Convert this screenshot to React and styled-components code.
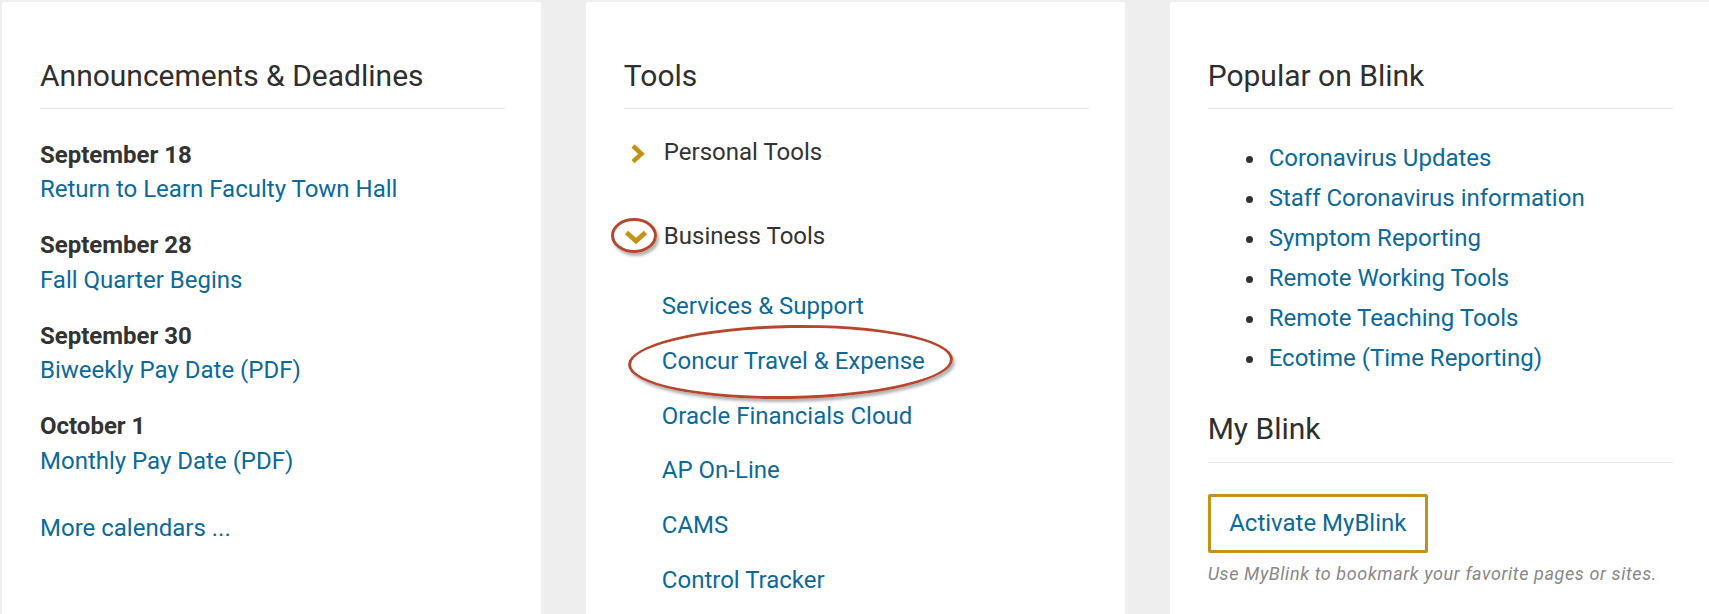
import React from 'react';
import styled, { createGlobalStyle } from 'styled-components';

const GlobalStyle = createGlobalStyle`
  html, body {
    margin: 0;
    padding: 0;
  }
  body {
    background: #eee;
    font-family: Roboto, "Noto Sans", Arial, sans-serif;
    color: #333;
  }
  * {
    box-sizing: border-box;
  }
`;

const events = [
    { date: 'September 18', title: 'Return to Learn Faculty Town Hall' },
    { date: 'September 28', title: 'Fall Quarter Begins' },
    { date: 'September 30', title: 'Biweekly Pay Date (PDF)' },
    { date: 'October 1', title: 'Monthly Pay Date (PDF)' }
];

const businessTools = [
    'Services & Support',
    'Concur Travel & Expense',
    'Oracle Financials Cloud',
    'AP On-Line',
    'CAMS',
    'Control Tracker'
];

const popular = [
    'Coronavirus Updates',
    'Staff Coronavirus information',
    'Symptom Reporting',
    'Remote Working Tools',
    'Remote Teaching Tools',
    'Ecotime (Time Reporting)'
];

const ChevronRight = () => (
    <svg width="26" height="35" viewBox="0 0 26 35">
        <polyline points="9,11 17.5,18.8 9,26.6" fill="none" stroke="#c69214" strokeWidth="4.5" />
    </svg>
);

const ChevronDown = () => (
    <svg width="26" height="35" viewBox="0 0 26 35">
        <polyline points="2.5,13.5 12,22 21.5,13.5" fill="none" stroke="#c69214" strokeWidth="4.8" />
    </svg>
);

const App = () => {
    return (<>
        <GlobalStyle />
        <Page>
            <Card>
                <Heading>Announcements &amp; Deadlines</Heading>
                <EventList>
                    {events.map(ev => (
                        <Event key={ev.date}>
                            <EventDate>{ev.date}</EventDate>
                            <TextLink href="#">{ev.title}</TextLink>
                        </Event>
                    ))}
                </EventList>
                <MoreLink href="#">More calendars ...</MoreLink>
            </Card>

            <Card>
                <Heading>Tools</Heading>
                <ToolGroups>
                    <Toggle>
                        <ChevronRight />
                        <span>Personal Tools</span>
                    </Toggle>
                    <div>
                        <Toggle>
                            <ChevronDown />
                            <span>Business Tools</span>
                            <Ring $x={-13} $y={-1.5} $w={46} $h={35} />
                        </Toggle>
                        <SubList>
                            {businessTools.map(t => (
                                <SubItem key={t}>
                                    <TextLink href="#">{t}</TextLink>
                                    {t === 'Concur Travel & Expense' && (
                                        <Ring $x={-34} $y={-19} $w={325} $h={74} $tilt />
                                    )}
                                </SubItem>
                            ))}
                        </SubList>
                    </div>
                </ToolGroups>
            </Card>

            <Card>
                <Heading>Popular on Blink</Heading>
                <BulletList>
                    {popular.map(p => (
                        <Bullet key={p}>
                            <TextLink href="#">{p}</TextLink>
                        </Bullet>
                    ))}
                </BulletList>
                <Heading $spaced>My Blink</Heading>
                <ButtonRow>
                    <OutlineButton href="#">Activate MyBlink</OutlineButton>
                </ButtonRow>
                <HelpText>Use MyBlink to bookmark your favorite pages or sites.</HelpText>
            </Card>
        </Page>
    </>);
}

export default App;

const Page = styled.div`
    display: grid;
    grid-template-columns: repeat(3, 1fr);
    column-gap: 44.5px;
    padding: 2px 0 0 2px;
    height: 100vh;
    overflow: hidden;
`

const Card = styled.section`
    background: #fff;
    padding: 56px 36px 0 38px;
`

const Heading = styled.h2`
    margin: ${p => p.$spaced ? '35px 0 0' : '0'};
    padding-bottom: ${p => p.$spaced ? '15px' : '14px'};
    border-bottom: 1px solid #e6e6e6;
    font-size: 30px;
    line-height: 36px;
    font-weight: 400;
    color: #2f2f2f;
`

const EventList = styled.div`
    margin-top: 28.5px;
    display: flex;
    flex-direction: column;
    gap: 21.5px;
`

const Event = styled.div`
    display: flex;
    flex-direction: column;
`

const EventDate = styled.strong`
    font-size: 24px;
    line-height: 34.5px;
    font-weight: 700;
    color: #333;
`

const TextLink = styled.a`
    display: block;
    font-size: 24px;
    line-height: 34.5px;
    color: #0b6a9b;
    text-decoration: none;
`

const MoreLink = styled(TextLink)`
    margin-top: 32.5px;
`

const ToolGroups = styled.div`
    margin-top: 25.5px;
    display: flex;
    flex-direction: column;
    gap: 49.5px;
`

const Toggle = styled.div`
    position: relative;
    display: flex;
    align-items: center;
    gap: 14px;
    font-size: 24px;
    line-height: 34.5px;
    color: #333;

    svg {
        flex: none;
        display: block;
    }
`

const SubList = styled.div`
    margin-top: 35px;
    padding-left: 38px;
    display: flex;
    flex-direction: column;
    gap: 20.3px;
`

const SubItem = styled.div`
    position: relative;
`

const Ring = styled.span`
    position: absolute;
    left: ${p => p.$x}px;
    top: ${p => p.$y}px;
    width: ${p => p.$w}px;
    height: ${p => p.$h}px;
    border: 3.5px solid #b8462f;
    border-radius: 50%;
    box-shadow: 2px 3px 3px rgba(0, 0, 0, 0.3);
    transform: ${p => p.$tilt ? 'rotate(-1deg)' : 'none'};
    pointer-events: none;
`

const BulletList = styled.ul`
    list-style: none;
    margin: 32px 0 0;
    padding: 0 0 0 61px;
    display: flex;
    flex-direction: column;
    gap: 5.5px;
`

const Bullet = styled.li`
    position: relative;

    &::before {
        content: '';
        position: absolute;
        left: -22.5px;
        top: 14.5px;
        width: 7px;
        height: 7px;
        border-radius: 50%;
        background: #333;
    }
`

const ButtonRow = styled.div`
    margin-top: 31px;
`

const OutlineButton = styled.a`
    display: inline-block;
    padding: 9.5px 18.5px;
    border: 3px solid #c69214;
    border-radius: 2px;
    font-size: 24px;
    line-height: 34.5px;
    color: #0b6a9b;
    text-decoration: none;
`

const HelpText = styled.p`
    margin: 9px 0 0;
    font-size: 18px;
    line-height: 24px;
    font-style: italic;
    letter-spacing: 0.6px;
    color: #888;
`
